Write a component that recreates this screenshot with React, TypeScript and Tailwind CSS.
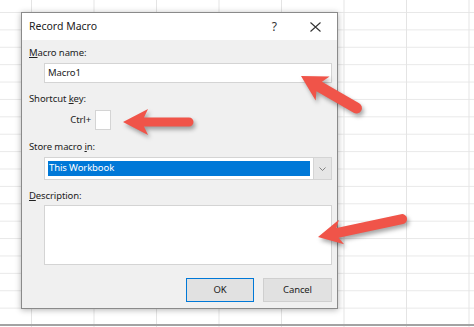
import React from 'react'

const font = "font-['Segoe_UI','Noto_Sans',sans-serif]"

// arrow pointing left, tip at 0,0 and tail at +len
function arrowPath(len: number, head: number, half: number, shaft: number) {
  return `M0,0 L${head},${-half} L${head - 4},${-shaft} L${len},${-shaft} A${shaft},${shaft} 0 0 1 ${len},${shaft} L${head - 4},${shaft} L${head},${half} Z`
}

function Arrows() {
  const arrows = [
    { x: 301, y: 76, rot: 30, len: 64, head: 25, half: 14, shaft: 5.5 },
    { x: 123, y: 122, rot: 0, len: 66, head: 25, half: 13, shaft: 4.5 },
    { x: 318, y: 237, rot: -12, len: 86, head: 24, half: 12.5, shaft: 5 },
  ]
  return (
    <svg
      className="pointer-events-none absolute inset-0 drop-shadow-[2px_3px_2px_rgba(0,0,0,0.35)]"
      width="474"
      height="327"
      viewBox="0 0 474 327"
    >
      {arrows.map((a, i) => (
        <path
          key={i}
          d={arrowPath(a.len, a.head, a.half, a.shaft)}
          transform={`translate(${a.x} ${a.y}) rotate(${a.rot})`}
          fill="#f05449"
        />
      ))}
    </svg>
  )
}

function Label({ children }: { children: React.ReactNode }) {
  return (
    <div className="h-[14px] pl-[7px] text-[9.5px] leading-[14px] tracking-[-0.1px] text-[#222]">{children}</div>
  )
}

export default function App() {
  return (
    <div
      className={`relative h-[327px] w-[474px] overflow-hidden bg-white ${font} [background-image:linear-gradient(to_right,#e4e4e4_1px,transparent_1px),linear-gradient(to_bottom,#e8e8e8_1px,transparent_1px)] [background-position:31px_12px] [background-size:62.5px_17.4px]`}
    >
      <div className="flex h-[324px] flex-col pl-[21px] pt-[12px]">
        <div className="flex h-[297px] w-[317px] flex-col border border-[#8a8a8a] bg-[#f0f0f0] shadow-[0_1px_6px_rgba(0,0,0,0.3)]">
          {/* title bar */}
          <div className="flex h-[27px] items-center bg-white pl-[7px] pr-[16px]">
            <span className="text-[10.5px] text-[#222]">Record Macro</span>
            <span className="ml-auto text-[12px] text-[#333]">?</span>
            <svg className="ml-[33px]" width="11" height="10" viewBox="0 0 11 10">
              <path d="M0.5 0.5 L10.5 9.5 M10.5 0.5 L0.5 9.5" stroke="#333" strokeWidth="1.1" />
            </svg>
          </div>

          <div className="flex flex-col pt-[6px] pr-[5px] tracking-[-0.1px]">
            <Label>
              <span className="underline underline-offset-1">M</span>acro name:
            </Label>
            <div className="ml-[22px] mt-[3px] flex h-[20px] items-center border border-[#d4d4d4] bg-white pl-[3px] text-[9.5px] text-[#222]">
              Macro1
            </div>

            <div className="mt-[9px]">
              <Label>
                Shortcut <span className="underline underline-offset-1">k</span>ey:
              </Label>
            </div>
            <div className="mt-[4px] flex h-[20px] w-[89px] items-center justify-end">
              <span className="text-[9.5px] text-[#222]">Ctrl+</span>
              <div className="ml-[4px] h-[20px] w-[16px] border border-[#d4d4d4] bg-white" />
            </div>

            <div className="mt-[10px]">
              <Label>
                Store macro <span className="underline underline-offset-1">i</span>n:
              </Label>
            </div>
            <div className="ml-[22px] mt-[3px] flex h-[23px] border border-[#d4d4d4] bg-white">
              <div className="flex flex-1 items-center p-[3px]">
                <div className="flex h-full w-full items-center bg-[#0078d7] pl-[1px] text-[9.5px] text-white">
                  This Workbook
                </div>
              </div>
              <div className="flex w-[18px] items-center justify-center border-l border-[#d4d4d4] bg-[#e6e6e6]">
                <svg width="7" height="4" viewBox="0 0 7 4">
                  <path d="M0.5 0.5 L3.5 3.5 L6.5 0.5" fill="none" stroke="#777" strokeWidth="0.9" />
                </svg>
              </div>
            </div>

            <div className="mt-[9px]">
              <Label>
                <span className="underline underline-offset-1">D</span>escription:
              </Label>
            </div>
            <div className="ml-[22px] mt-[2px] h-[60px] border border-[#d4d4d4] bg-white" />

            <div className="mt-[13px] flex justify-end gap-[9px]">
              <div className="flex h-[24px] w-[68px] items-center justify-center border border-[#0078d7] bg-[#e1e1e1] text-[9.5px] text-[#222]">
                OK
              </div>
              <div className="flex h-[24px] w-[69px] items-center justify-center border border-[#cfcfcf] bg-[#e1e1e1] text-[9.5px] text-[#222]">
                Cancel
              </div>
            </div>
          </div>
        </div>
      </div>
      <div className="h-[2px] w-full bg-[#a3a3a3]" />
      <Arrows />
    </div>
  )
}
